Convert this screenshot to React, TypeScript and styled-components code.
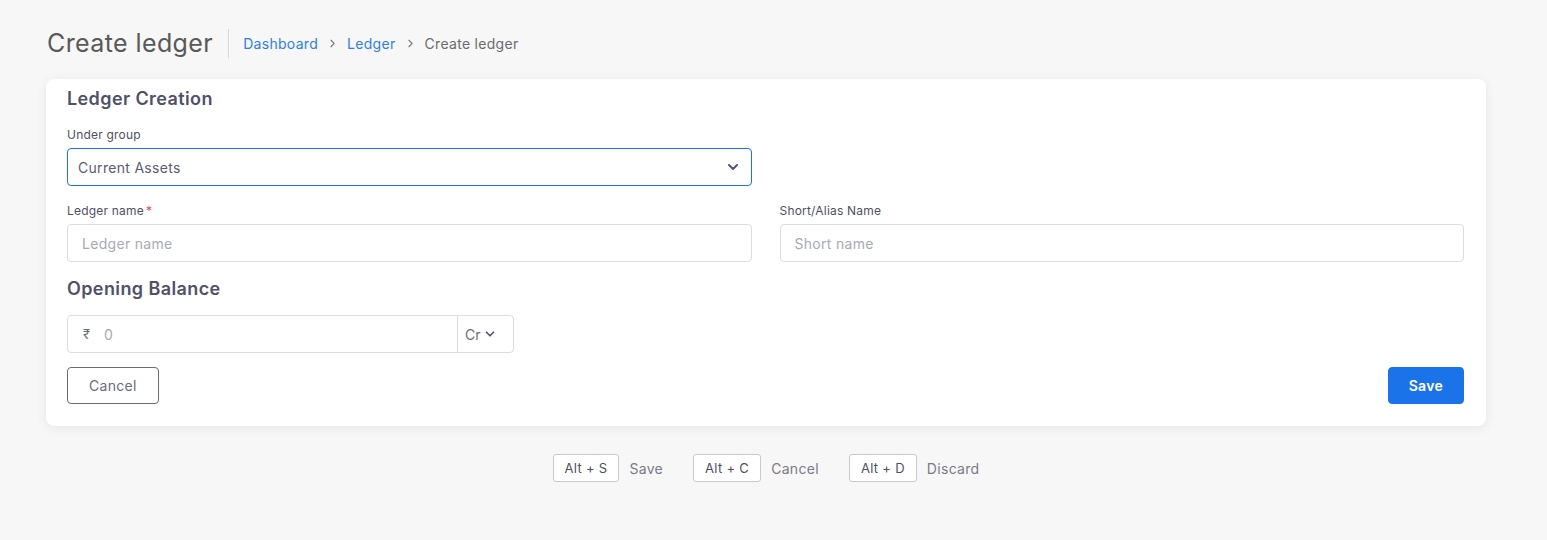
import { createGlobalStyle } from "styled-components";
import styled from "styled-components";
import { ChevronDown, ChevronRight } from "lucide-react";

const GlobalStyle = createGlobalStyle`
  html, body {
    margin: 0;
    background: #f7f7f7;
    font-family: Inter, "Noto Sans", sans-serif;
    color: #5b5b6b;
  }
  * {
    box-sizing: border-box;
  }
`;

const Page = styled.div`
  padding: 27px 61px 40px 46px;
  min-height: 540px;
`;

const TitleRow = styled.div`
  display: flex;
  align-items: center;
  height: 32px;
  margin-bottom: 20px;
`;

const Title = styled.h1`
  margin: 0 0 0 1px;
  font-size: 25px;
  font-weight: 400;
  color: #595959;
  letter-spacing: 0.4px;
`;

const Divider = styled.div`
  width: 1px;
  height: 29px;
  background: #d9d9d9;
  margin: 0 14px 0 15px;
`;

const Crumbs = styled.nav`
  display: flex;
  align-items: center;
  gap: 8px;
  font-size: 14px;
  letter-spacing: 0.3px;
`;

const Crumb = styled.a<{ $active?: boolean }>`
  color: ${(p) => (p.$active ? "#6b6b6b" : "#2f7fe6")};
  text-decoration: none;
`;

const Sep = styled.span`
  display: flex;
  color: #7a7a7a;
`;

const Card = styled.section`
  background: #fff;
  border-radius: 8px;
  box-shadow: 0 2px 12px rgba(0, 0, 0, 0.07);
  padding: 8px 22px 22px 21px;
`;

const SectionTitle = styled.h2<{ $gap?: number; $after?: number }>`
  margin: ${(p) => p.$gap ?? 0}px 0 ${(p) => p.$after ?? 15}px;
  font-size: 18px;
  line-height: 24px;
  font-weight: 600;
  color: #50506a;
  letter-spacing: 0.4px;
`;

const Grid = styled.div`
  display: grid;
  grid-template-columns: 1fr 1fr;
  column-gap: 28px;
  row-gap: 16px;
`;

const Field = styled.div`
  display: flex;
  flex-direction: column;
  gap: 4px;
`;

const Label = styled.label`
  font-size: 12px;
  line-height: 18px;
  color: #4f4f5f;
  letter-spacing: 0.2px;
`;

const Star = styled.span`
  color: #e5484d;
  margin-left: 2px;
`;

const SelectBox = styled.div`
  display: flex;
  align-items: center;
  justify-content: space-between;
  height: 38px;
  padding: 0 10px 0 10px;
  border: 1px solid #1a73e8;
  border-radius: 4px;
  font-size: 14px;
  color: #5b5b6b;
  letter-spacing: 0.3px;
  svg {
    color: #55556a;
  }
`;

const Input = styled.input`
  height: 38px;
  width: 100%;
  padding: 0 14px;
  border: 1px solid #dcdce2;
  border-radius: 4px;
  font-family: inherit;
  font-size: 14px;
  letter-spacing: 0.3px;
  outline: none;
  &::placeholder {
    color: #a9a9b4;
  }
`;

const AmountGroup = styled.div`
  display: flex;
  width: 447px;
  height: 38px;
  border: 1px solid #dcdce2;
  border-radius: 4px;
  margin-bottom: 14px;
`;

const Currency = styled.span`
  display: flex;
  align-items: center;
  padding: 0 0 0 15px;
  font-size: 13px;
  color: #6b6b7b;
`;

const AmountInput = styled.input`
  flex: 1;
  border: none;
  outline: none;
  padding: 0 14px 0 14px;
  font-family: inherit;
  font-size: 14px;
  background: transparent;
  &::placeholder {
    color: #a9a9b4;
  }
`;

const TypeSelect = styled.div`
  display: flex;
  align-items: center;
  gap: 2px;
  width: 56px;
  padding-left: 7px;
  border-left: 1px solid #dcdce2;
  font-size: 14px;
  color: #6b6b7b;
  svg {
    color: #55556a;
  }
`;

const Actions = styled.div`
  display: flex;
  justify-content: space-between;
`;

const Button = styled.button<{ $primary?: boolean }>`
  height: 37px;
  padding: 0 ${(p) => (p.$primary ? 20 : 21)}px;
  border-radius: 4px;
  font-family: inherit;
  font-size: 14px;
  letter-spacing: 0.3px;
  cursor: pointer;
  border: 1px solid ${(p) => (p.$primary ? "#1a73e8" : "#6b6b6b")};
  background: ${(p) => (p.$primary ? "#1a73e8" : "#fff")};
  color: ${(p) => (p.$primary ? "#fff" : "#6b6b7b")};
  font-weight: ${(p) => (p.$primary ? 600 : 400)};
`;

const Shortcuts = styled.div`
  display: flex;
  justify-content: center;
  align-items: center;
  margin-top: 28px;
  gap: 30px;
`;

const Shortcut = styled.div`
  display: flex;
  align-items: center;
  gap: 10px;
  font-size: 14px;
  color: #7a7a88;
  letter-spacing: 0.3px;
`;

const Kbd = styled.kbd`
  display: inline-flex;
  align-items: center;
  height: 28px;
  padding: 0 11px;
  background: #fff;
  border: 1px solid #c9c9c9;
  border-radius: 3px;
  font-family: inherit;
  font-size: 13px;
  color: #4f4f5f;
`;

const shortcuts = [
  { keys: "Alt + S", label: "Save" },
  { keys: "Alt + C", label: "Cancel" },
  { keys: "Alt + D", label: "Discard" },
];

export default function App() {
  return (
    <>
      <GlobalStyle />
      <Page>
        <TitleRow>
          <Title>Create ledger</Title>
          <Divider />
          <Crumbs>
            <Crumb href="#">Dashboard</Crumb>
            <Sep>
              <ChevronRight size={13} />
            </Sep>
            <Crumb href="#">Ledger</Crumb>
            <Sep>
              <ChevronRight size={13} />
            </Sep>
            <Crumb $active>Create ledger</Crumb>
          </Crumbs>
        </TitleRow>

        <Card>
          <SectionTitle>Ledger Creation</SectionTitle>
          <Grid>
            <Field>
              <Label>Under group</Label>
              <SelectBox>
                Current Assets
                <ChevronDown size={16} strokeWidth={3} />
              </SelectBox>
            </Field>
            <div />
            <Field>
              <Label>
                Ledger name<Star>*</Star>
              </Label>
              <Input placeholder="Ledger name" />
            </Field>
            <Field>
              <Label>Short/Alias Name</Label>
              <Input placeholder="Short name" />
            </Field>
          </Grid>

          <SectionTitle $gap={15} $after={14}>
            Opening Balance
          </SectionTitle>
          <AmountGroup>
            <Currency>₹</Currency>
            <AmountInput placeholder="0" />
            <TypeSelect>
              Cr
              <ChevronDown size={14} strokeWidth={3} />
            </TypeSelect>
          </AmountGroup>

          <Actions>
            <Button>Cancel</Button>
            <Button $primary>Save</Button>
          </Actions>
        </Card>

        <Shortcuts>
          {shortcuts.map((s) => (
            <Shortcut key={s.keys}>
              <Kbd>{s.keys}</Kbd>
              {s.label}
            </Shortcut>
          ))}
        </Shortcuts>
      </Page>
    </>
  );
}
